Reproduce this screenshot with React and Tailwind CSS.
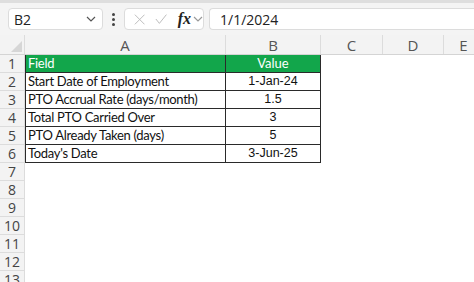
import React from 'react';

const rows = [
  ['Start Date of Employment', '1-Jan-24'],
  ['PTO Accrual Rate (days/month)', '1.5'],
  ['Total PTO Carried Over', '3'],
  ['PTO Already Taken (days)', '5'],
  ["Today's Date", '3-Jun-25'],
];

const cols = [
  { name: 'A', w: 'w-[201px]' },
  { name: 'B', w: 'w-[95px]' },
  { name: 'C', w: 'w-[62px]' },
  { name: 'D', w: 'w-[61px]' },
  { name: 'E', w: 'w-[40px]' },
];

function Chevron({ color = '#555' }) {
  return (
    <svg width="10" height="6" viewBox="0 0 10 6">
      <path d="M1 1l4 4 4-4" fill="none" stroke={color} strokeWidth="1.2" />
    </svg>
  );
}

function RowNum({ n }) {
  return (
    <div className="w-[25px] h-[18px] shrink-0 bg-[#f3f3f3] border-r border-b border-[#dcdcdc] text-[#444] text-[14px] leading-[18px] text-center font-['Open_Sans',sans-serif]">
      {n}
    </div>
  );
}

export default function App() {
  return (
    <div className="w-[474px] h-[282px] overflow-hidden bg-white font-['Liberation_Sans',sans-serif]">
      {/* formula bar */}
      <div className="h-[35px] bg-[#f4f4f4] border-t-[3px] border-[#dedede] flex items-center pl-[8px] gap-[5px]">
        <div className="w-[95px] h-[22px] bg-white border border-[#dcdcdc] rounded-[4px] flex items-center justify-between pl-[5px] pr-[6px]">
          <span className="text-[14px] text-[#222] font-['Open_Sans',sans-serif]">B2</span>
          <Chevron />
        </div>
        <div className="flex flex-col gap-[2px] px-[4px]">
          <span className="w-[3px] h-[3px] bg-[#444] rounded-full" />
          <span className="w-[3px] h-[3px] bg-[#444] rounded-full" />
          <span className="w-[3px] h-[3px] bg-[#444] rounded-full" />
        </div>
        <div className="w-[80px] h-[22px] bg-white border border-[#dcdcdc] rounded-[4px] flex items-center pl-[9px] gap-[10px]">
          <svg width="13" height="13" viewBox="0 0 13 13">
            <path d="M1 1l11 11M12 1L1 12" stroke="#bbb" strokeWidth="1.1" fill="none" />
          </svg>
          <svg width="14" height="12" viewBox="0 0 14 12">
            <path d="M1 6l4 5 8-10" stroke="#bbb" strokeWidth="1.1" fill="none" />
          </svg>
          <div className="flex items-center gap-[2px]">
            <span className="text-[16px] italic font-bold text-[#222] font-['Liberation_Serif',serif] leading-none">fx</span>
            <Chevron color="#999" />
          </div>
        </div>
        <div className="flex-1 h-[22px] bg-white border border-[#dcdcdc] rounded-l-[4px] border-r-0 flex items-center pl-[10px]">
          <span className="text-[14px] text-[#222] font-['Open_Sans',sans-serif]">1/1/2024</span>
        </div>
      </div>

      {/* column headers */}
      <div className="flex h-[20px] bg-[#f3f3f3] border-b border-[#d4d4d4]">
        <div className="w-[25px] shrink-0 border-r border-[#dcdcdc] flex items-end justify-end pr-[2px] pb-[2px]">
          <svg width="11" height="11" viewBox="0 0 11 11">
            <path d="M11 0V11H0Z" fill="#d6d6d6" />
          </svg>
        </div>
        {cols.map((c) => (
          <div
            key={c.name}
            className={`${c.w} shrink-0 border-r border-[#dcdcdc] text-center text-[15px] leading-[20px] text-[#555] font-['Open_Sans',sans-serif]`}
          >
            {c.name}
          </div>
        ))}
      </div>

      {/* header row */}
      <div className="flex">
        <RowNum n={1} />
        <div className="w-[201px] h-[18px] shrink-0 bg-[#12a64b] border-l border-r border-b border-[#2a2a2a] text-white text-[13px] tracking-[-0.3px] leading-[17px] pl-[2px] font-['Lato',sans-serif]">
          Field
        </div>
        <div className="w-[95px] h-[18px] shrink-0 bg-[#12a64b] border-r border-b border-[#2a2a2a] text-white text-[13px] leading-[17px] text-center font-['Lato',sans-serif]">
          Value
        </div>
      </div>

      {rows.map(([field, value], i) => (
        <div key={field} className="flex">
          <RowNum n={i + 2} />
          <div className="w-[201px] h-[18px] shrink-0 border-l border-r border-b border-[#2a2a2a] text-[#111] text-[13px] tracking-[-0.3px] leading-[17px] pl-[2px] font-['Lato',sans-serif]">
            {field}
          </div>
          <div className="w-[95px] h-[18px] shrink-0 border-r border-b border-[#2a2a2a] text-[#111] text-[12.5px] leading-[17px] text-center">
            {value}
          </div>
        </div>
      ))}

      {[7, 8, 9, 10, 11, 12, 13].map((n) => (
        <div key={n} className="flex">
          <RowNum n={n} />
        </div>
      ))}
    </div>
  );
}
